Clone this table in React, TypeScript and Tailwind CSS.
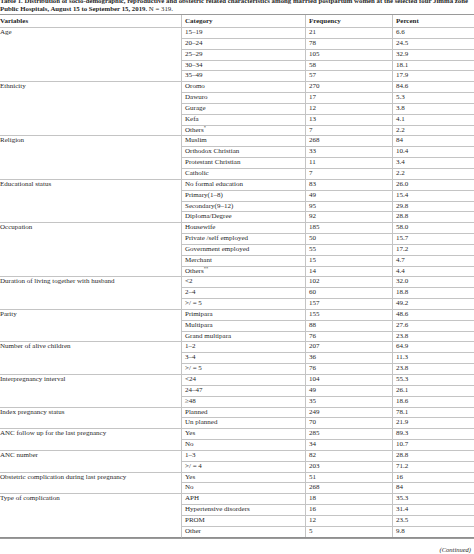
import React from "react";

type Row = [React.ReactNode, string, string];
type Group = { v: string; rows: Row[] };

const groups: Group[] = [
  { v: "Age", rows: [["15–19", "21", "6.6"], ["20–24", "78", "24.5"], ["25–29", "105", "32.9"], ["30–34", "58", "18.1"], ["35–49", "57", "17.9"]] },
  { v: "Ethnicity", rows: [["Oromo", "270", "84.6"], ["Dawuro", "17", "5.3"], ["Gurage", "12", "3.8"], ["Kefa", "13", "4.1"], [<>Others<sup className="text-[4.5px]">*</sup></>, "7", "2.2"]] },
  { v: "Religion", rows: [["Muslim", "268", "84"], ["Orthodox Christian", "33", "10.4"], ["Protestant Christian", "11", "3.4"], ["Catholic", "7", "2.2"]] },
  { v: "Educational status", rows: [["No formal education", "83", "26.0"], ["Primary(1–8)", "49", "15.4"], ["Secondary(9–12)", "95", "29.8"], ["Diploma/Degree", "92", "28.8"]] },
  { v: "Occupation", rows: [["Housewife", "185", "58.0"], ["Private /self employed", "50", "15.7"], ["Government employed", "55", "17.2"], ["Merchant", "15", "4.7"], [<>Others<sup className="text-[4.5px]">**</sup></>, "14", "4.4"]] },
  { v: "Duration of living together with husband", rows: [["<2", "102", "32.0"], ["2–4", "60", "18.8"], [">/ = 5", "157", "49.2"]] },
  { v: "Parity", rows: [["Primipara", "155", "48.6"], ["Multipara", "88", "27.6"], ["Grand multipara", "76", "23.8"]] },
  { v: "Number of alive children", rows: [["1–2", "207", "64.9"], ["3–4", "36", "11.3"], [">/ = 5", "76", "23.8"]] },
  { v: "Interpregnancy interval", rows: [["<24", "104", "55.3"], ["24–47", "49", "26.1"], ["≥48", "35", "18.6"]] },
  { v: "Index pregnancy status", rows: [["Planned", "249", "78.1"], ["Un planned", "70", "21.9"]] },
  { v: "ANC follow up for the last pregnancy", rows: [["Yes", "285", "89.3"], ["No", "34", "10.7"]] },
  { v: "ANC number", rows: [["1–3", "82", "28.8"], [">/ = 4", "203", "71.2"]] },
  { v: "Obstetric complication during last pregnancy", rows: [["Yes", "51", "16"], ["No", "268", "84"]] },
  { v: "Type of complication", rows: [["APH", "18", "35.3"], ["Hypertensive disorders", "16", "31.4"], ["PROM", "12", "23.5"], ["Other", "5", "9.8"]] },
];

export default function App() {
  return (
    <div
      className="w-[474px] h-[554px] overflow-hidden bg-white text-[#1f1f1f]"
      style={{ fontFamily: '"Liberation Serif", "Times New Roman", serif' }}
    >
      <div className="mt-[-3.5px] mb-[1.5px] text-[6.8px] leading-[8px] whitespace-nowrap font-bold">
        Table 1. Distribution of socio-demographic, reproductive and obstetric related characteristics among married postpartum women at the selected four Jimma zone
        <br />
        Public Hospitals, August 15 to September 15, 2019. <span className="font-normal">N = 319.</span>
      </div>
      <div className="text-[7px]">
        <div className="flex h-[14px] border-t border-b border-t-[#9a9a9a] border-b-[#c4c4c4] font-bold leading-[13px]">
          <div className="w-[182px] shrink-0 border-r border-[#c4c4c4]">Variables</div>
          <div className="w-[124px] shrink-0 pl-[3px] border-r border-[#c4c4c4]">Category</div>
          <div className="w-[87px] shrink-0 pl-[3px] border-r border-[#c4c4c4]">Frequency</div>
          <div className="w-[81px] shrink-0 pl-[3px]">Percent</div>
        </div>
        {groups.map((g, gi) => {
          const last = gi === groups.length - 1;
          const bc = last ? "border-b-[#8f8f8f]" : "border-b-[#c4c4c4]";
          return (
            <div key={gi} className="flex">
              <div className={`w-[182px] shrink-0 border-r border-b border-r-[#c4c4c4] ${bc} leading-[9.8px] whitespace-nowrap`}>
                {g.v}
              </div>
              <div className="flex flex-col w-[292px] shrink-0">
                {g.rows.map((r, ri) => {
                  const rb = last && ri === g.rows.length - 1 ? "border-b-[#8f8f8f]" : "border-b-[#c4c4c4]";
                  return (
                    <div key={ri} className={`flex h-[10.85px] border-b ${rb} leading-[9.8px] whitespace-nowrap`}>
                      <div className="w-[124px] shrink-0 pl-[3px] border-r border-[#c4c4c4]">{r[0]}</div>
                      <div className="w-[87px] shrink-0 pl-[3px] border-r border-[#c4c4c4]">{r[1]}</div>
                      <div className="w-[81px] shrink-0 pl-[3px]">{r[2]}</div>
                    </div>
                  );
                })}
              </div>
            </div>
          );
        })}
        <div className="h-[1px] bg-[#9a9a9a]" />
        <div className="mt-[7px] pr-[3px] text-right italic text-[6.5px] leading-[8px]">(Continued)</div>
      </div>
    </div>
  );
}
